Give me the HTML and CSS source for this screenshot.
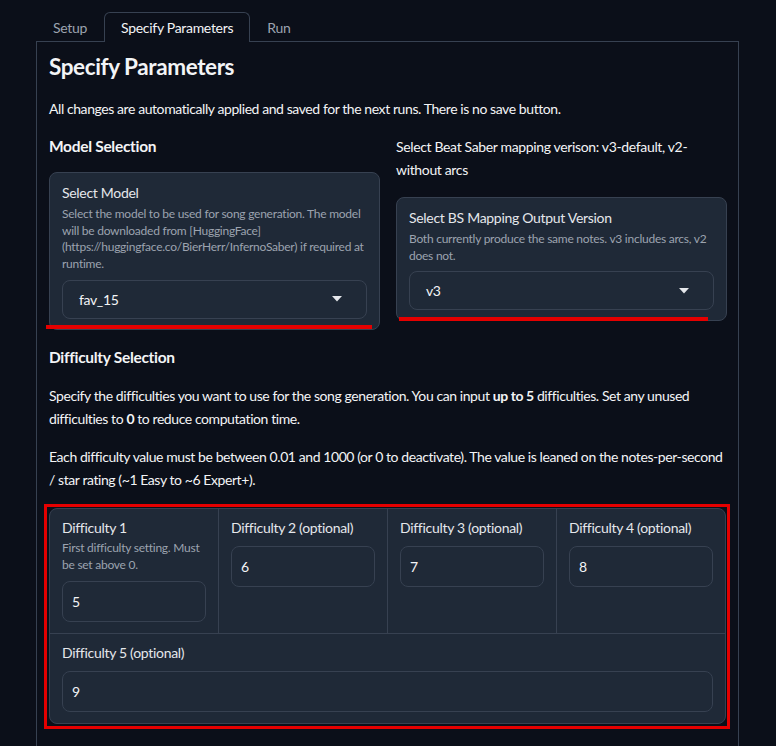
FILE: index.html
```html
<!DOCTYPE html>
<html lang="en">
<head>
    <meta charset="UTF-8">
    <meta name="viewport" content="width=device-width, initial-scale=1.0">
    <title>Specify Parameters</title>
    <link rel="stylesheet" href="styles.css">
</head>
<body>
    <div class="app">
        <div class="tab-nav">
            <button class="tab">Setup</button>
            <button class="tab selected">Specify Parameters</button>
            <button class="tab">Run</button>
        </div>

        <div class="tab-panel">
            <div class="prose">
                <h2>Specify Parameters</h2>
                <p>All changes are automatically applied and saved for the next runs. There is no save button.</p>
            </div>

            <div class="row">
                <div class="col">
                    <h3 class="md-heading">Model Selection</h3>
                    <div class="block">
                        <span class="label">Select Model</span>
                        <span class="info">Select the model to be used for song generation. The model will be downloaded from [HuggingFace] (https://huggingface.co/BierHerr/InfernoSaber) if required at runtime.</span>
                        <div class="dropdown">
                            <span>fav_15</span>
                            <svg width="10" height="6" viewBox="0 0 10 6"><path d="M0 0 L10 0 L5 5.5 Z" fill="#e5e7eb"/></svg>
                        </div>
                        <div class="mark mark-left"></div>
                    </div>
                </div>
                <div class="col">
                    <p class="md-text">Select Beat Saber mapping verison: v3-default, v2-without arcs</p>
                    <div class="block">
                        <span class="label">Select BS Mapping Output Version</span>
                        <span class="info">Both currently produce the same notes. v3 includes arcs, v2 does not.</span>
                        <div class="dropdown">
                            <span>v3</span>
                            <svg width="10" height="6" viewBox="0 0 10 6"><path d="M0 0 L10 0 L5 5.5 Z" fill="#e5e7eb"/></svg>
                        </div>
                        <div class="mark mark-right"></div>
                    </div>
                </div>
            </div>

            <div class="prose">
                <h3>Difficulty Selection</h3>
                <p>Specify the difficulties you want to use for the song generation. You can input <strong>up to 5</strong> difficulties. Set any unused difficulties to <strong>0</strong> to reduce computation time.</p>
                <p>Each difficulty value must be between 0.01 and 1000 (or 0 to deactivate). The value is leaned on the notes-per-second / star rating (~1 Easy to ~6 Expert+).</p>
            </div>

            <div class="highlight">
                <div class="form">
                    <div class="cell">
                        <span class="label">Difficulty 1</span>
                        <span class="info">First difficulty setting. Must be set above 0.</span>
                        <input class="num" type="number" value="5">
                    </div>
                    <div class="cell">
                        <span class="label">Difficulty 2 (optional)</span>
                        <input class="num" type="number" value="6">
                    </div>
                    <div class="cell">
                        <span class="label">Difficulty 3 (optional)</span>
                        <input class="num" type="number" value="7">
                    </div>
                    <div class="cell">
                        <span class="label">Difficulty 4 (optional)</span>
                        <input class="num" type="number" value="8">
                    </div>
                    <div class="cell wide">
                        <span class="label">Difficulty 5 (optional)</span>
                        <input class="num" type="number" value="9">
                    </div>
                </div>
            </div>

            <div class="prose">
                <h3>Tools</h3>
                <p>Additional settings for the generation.</p>
            </div>
        </div>
    </div>
</body>
</html>
```

FILE: styles.css
```css
body {
    margin: 0;
    background: #0b0f19;
    color: #f3f4f6;
    font-family: 'Lato', 'Open Sans', sans-serif;
    font-size: 14px;
    letter-spacing: -0.35px;
}

.app {
    padding: 0 37px 0 36px;
}

/* tabs */
.tab-nav {
    display: flex;
    align-items: flex-end;
    height: 42px;
}

.tab {
    height: 30px;
    padding: 0 16px;
    border: 1px solid transparent;
    border-bottom: none;
    background: none;
    color: #9ca3af;
    font-family: inherit;
    font-size: 14px;
    letter-spacing: -0.3px;
    cursor: pointer;
}

.tab.selected {
    position: relative;
    z-index: 1;
    background: #0b0f19;
    border-color: #374151;
    border-radius: 6px 6px 0 0;
    color: #f3f4f6;
}

.tab-panel {
    margin-top: -1px;
    border: 1px solid #374151;
    border-bottom: none;
    padding: 12px 11px 12px 12px;
    height: 760px;
}

/* markdown */
.prose h2 {
    margin: 0;
    font-size: 22.5px;
    line-height: 25px;
    font-weight: 700;
    letter-spacing: -0.4px;
}

.prose p,
.md-text {
    margin: 0;
    line-height: 23px;
}

.prose p {
    letter-spacing: -0.42px;
}

.prose h2 + p {
    margin-top: 18px;
}

.prose h3,
.md-heading {
    margin: 0;
    font-size: 15.5px;
    line-height: 22px;
    font-weight: 700;
    letter-spacing: -0.3px;
}

.prose h3 + p {
    margin-top: 16px;
}

.prose p + p {
    margin-top: 15px;
}

/* columns */
.row {
    display: flex;
    gap: 16px;
    margin: 15px 0 16px;
}

.col {
    flex: 1;
    display: flex;
    flex-direction: column;
    gap: 16px;
}

.col:first-child .block {
    margin-top: -1px;
}

.block {
    position: relative;
    background: #1f2937;
    border: 1px solid #374151;
    border-radius: 8px;
    padding: 10px 12px;
}

.label {
    display: block;
    color: #e5e7eb;
    font-size: 14px;
    line-height: 20px;
    letter-spacing: -0.3px;
}

.info {
    display: block;
    margin-top: 3px;
    color: #9ca3af;
    font-size: 12px;
    line-height: 16.7px;
    letter-spacing: -0.25px;
}

.dropdown {
    display: flex;
    justify-content: space-between;
    align-items: center;
    height: 37px;
    margin-top: 7px;
    padding: 0 24px 0 16px;
    border: 1px solid #374151;
    border-radius: 8px;
    color: #f3f4f6;
    font-size: 14px;
}

/* red annotation marks */
.mark {
    position: absolute;
    height: 4px;
    background: #e50000;
}

.mark-left {
    left: -4px;
    right: 7px;
    bottom: 0;
}

.mark-right {
    left: 2px;
    right: 18px;
    bottom: -1px;
}

.highlight {
    margin-top: 13px;
    border: 3px solid #e50000;
    padding: 1px 1px 2px 2px;
    margin-left: -5px;
    margin-right: -3px;
}

/* difficulty form */
.form {
    display: grid;
    grid-template-columns: repeat(4, 1fr);
    gap: 1px;
    background: #374151;
    border: 1px solid #374151;
    border-radius: 8px;
    overflow: hidden;
}

.cell {
    background: #1f2937;
    padding: 9px 12px 11px;
}

.cell.wide {
    grid-column: 1 / -1;
}

.cell .info {
    margin-top: 2px;
}

.num {
    display: block;
    box-sizing: border-box;
    width: 100%;
    height: 41px;
    margin-top: 8px;
    padding: 0 9px;
    background: #1f2937;
    border: 1px solid #374151;
    border-radius: 8px;
    color: #f3f4f6;
    font-family: inherit;
    font-size: 14px;
    -moz-appearance: textfield;
}

.num::-webkit-inner-spin-button,
.num::-webkit-outer-spin-button {
    -webkit-appearance: none;
}

.num:focus {
    outline: none;
}

.highlight + .prose {
    margin-top: 14px;
}
```
